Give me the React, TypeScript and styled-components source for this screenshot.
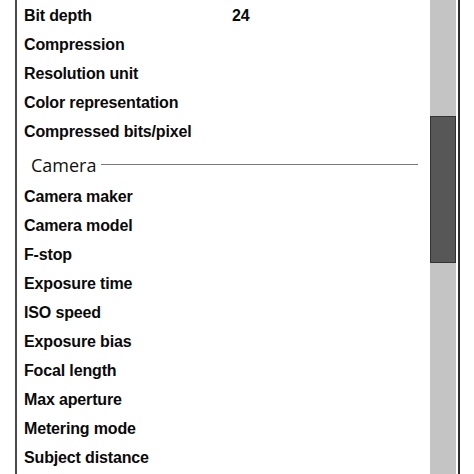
import React from "react";
import styled, { createGlobalStyle } from "styled-components";

const Global = createGlobalStyle`
  html, body { margin: 0; padding: 0; background: #ffffff; }
  body { font-family: "Liberation Sans", Arial, sans-serif; }
`;

const Frame = styled.div`
  margin-left: 15px;
  width: 445px;
  height: 474px;
  box-sizing: border-box;
  border-left: 2px solid #4a4a4a;
  border-right: 2px solid #2e2e2e;
  display: flex;
  overflow: hidden;
  background: #ffffff;
`;

const Content = styled.div`
  flex: 1;
  padding: 1px 12px 0 7px;
  overflow: hidden;
`;

const Row = styled.div`
  display: grid;
  grid-template-columns: 208px 1fr;
  height: 29px;
  line-height: 29px;
  font-family: "Liberation Sans", Arial, sans-serif;
  font-weight: 700;
  font-size: 16px;
  letter-spacing: -0.15px;
  color: #0a0a0a;
  white-space: nowrap;
`;

const Section = styled.div`
  display: flex;
  align-items: center;
  height: 36px;
  padding-left: 7px;
  gap: 5px;
`;

const SectionTitle = styled.span`
  font-family: "Open Sans", "Liberation Sans", sans-serif;
  font-size: 18px;
  font-weight: 400;
  color: #111111;
  position: relative;
  top: 1px;
`;

const SectionRule = styled.div`
  flex: 1;
  height: 1px;
  background: #7a7a7a;
`;

const Track = styled.div`
  position: relative;
  width: 26px;
  margin-right: 2px;
  background: #c4c4c4;
`;

const Thumb = styled.div`
  position: absolute;
  left: 0;
  right: 0;
  top: 116px;
  height: 147px;
  box-sizing: border-box;
  background: #575757;
  border: 1px solid #333333;
`;

type Item = { label: string; value?: string };

const image: Item[] = [
  { label: "Bit depth", value: "24" },
  { label: "Compression" },
  { label: "Resolution unit" },
  { label: "Color representation" },
  { label: "Compressed bits/pixel" },
];

const camera: Item[] = [
  { label: "Camera maker" },
  { label: "Camera model" },
  { label: "F-stop" },
  { label: "Exposure time" },
  { label: "ISO speed" },
  { label: "Exposure bias" },
  { label: "Focal length" },
  { label: "Max aperture" },
  { label: "Metering mode" },
  { label: "Subject distance" },
];

const PropRow = ({ item }: { item: Item }) => (
  <Row>
    <span>{item.label}</span>
    <span>{item.value ?? ""}</span>
  </Row>
);

export default function App() {
  return (
    <>
      <Global />
      <Frame>
        <Content>
          {image.map((it) => (
            <PropRow key={it.label} item={it} />
          ))}
          <Section>
            <SectionTitle>Camera</SectionTitle>
            <SectionRule />
          </Section>
          {camera.map((it) => (
            <PropRow key={it.label} item={it} />
          ))}
        </Content>
        <Track>
          <Thumb />
        </Track>
      </Frame>
    </>
  );
}
